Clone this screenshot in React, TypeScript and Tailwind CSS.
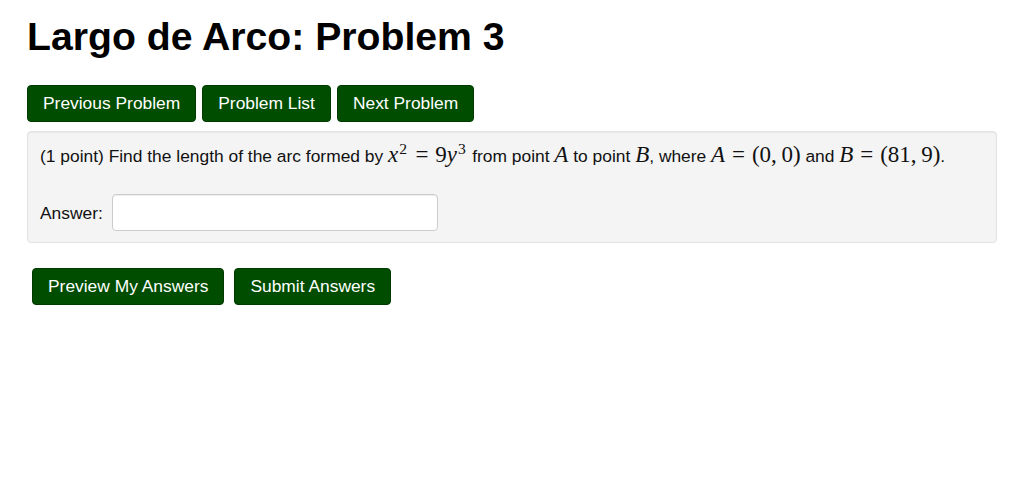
import React from "react";

const btn =
  "inline-flex items-center justify-center h-[37px] px-[15px] rounded-[4px] border border-[#003a00] bg-[#004d00] text-white text-[17.4px] leading-none";

function V({ children }: { children: React.ReactNode }) {
  return <span className="italic">{children}</span>;
}

function Sup({ children }: { children: React.ReactNode }) {
  return (
    <span className="relative -top-[0.5em] text-[0.68em] leading-none ml-[0.06em] mr-[0.1em]">
      {children}
    </span>
  );
}

function Eq() {
  return <span className="mx-[0.3em]">=</span>;
}

function Math({ children }: { children: React.ReactNode }) {
  return (
    <span className="text-[23px] leading-[16px] whitespace-nowrap [font-family:'Liberation_Serif',serif] text-[#111]">
      {children}
    </span>
  );
}

export default function App() {
  return (
    <div className="min-h-[488px] bg-white pl-[27px] pt-[15px] [font-family:'Liberation_Sans',Arial,sans-serif] text-[#111]">
      <h1 className="text-[39.2px] leading-[44px] font-bold text-black m-0">
        Largo de Arco: Problem 3
      </h1>
      <div className="flex gap-[6px] mt-[26px]">
        <button className={btn}>Previous Problem</button>
        <button className={btn}>Problem List</button>
        <button className={btn}>Next Problem</button>
      </div>
      <div className="mt-[9px] w-[970px] rounded-[4px] border border-[#e3e3e3] bg-[#f4f4f4] shadow-[inset_0_1px_1px_rgba(0,0,0,0.05)] pt-[12px] pb-[11px] pl-[12px] pr-[12px]">
        <p className="text-[17.4px] leading-[24px] m-0">
          (1 point) Find the length of the arc formed by{" "}
          <Math>
            <V>x</V>
            <Sup>2</Sup>
            <Eq />
            9<V>y</V>
            <Sup>3</Sup>
          </Math>{" "}
          from point{" "}
          <Math>
            <V>A</V>
          </Math>{" "}
          to point{" "}
          <Math>
            <V>B</V>
          </Math>
          , where{" "}
          <Math>
            <V>A</V>
            <Eq />
            (0,<span className="ml-[0.2em]">0)</span>
          </Math>{" "}
          and{" "}
          <Math>
            <V>B</V>
            <Eq />
            (81,<span className="ml-[0.2em]">9)</span>
          </Math>
          .
        </p>
        <div className="flex items-center mt-[26px]">
          <span className="text-[17.4px] leading-[24px]">Answer:</span>
          <input
            type="text"
            className="ml-[9px] w-[326px] h-[37px] rounded-[4px] border border-[#cccccc] bg-white shadow-[inset_0_1px_1px_rgba(0,0,0,0.075)] outline-none px-2"
          />
        </div>
      </div>
      <div className="flex gap-[10px] mt-[25px] ml-[5px]">
        <button className={btn}>Preview My Answers</button>
        <button className={btn}>Submit Answers</button>
      </div>
    </div>
  );
}
